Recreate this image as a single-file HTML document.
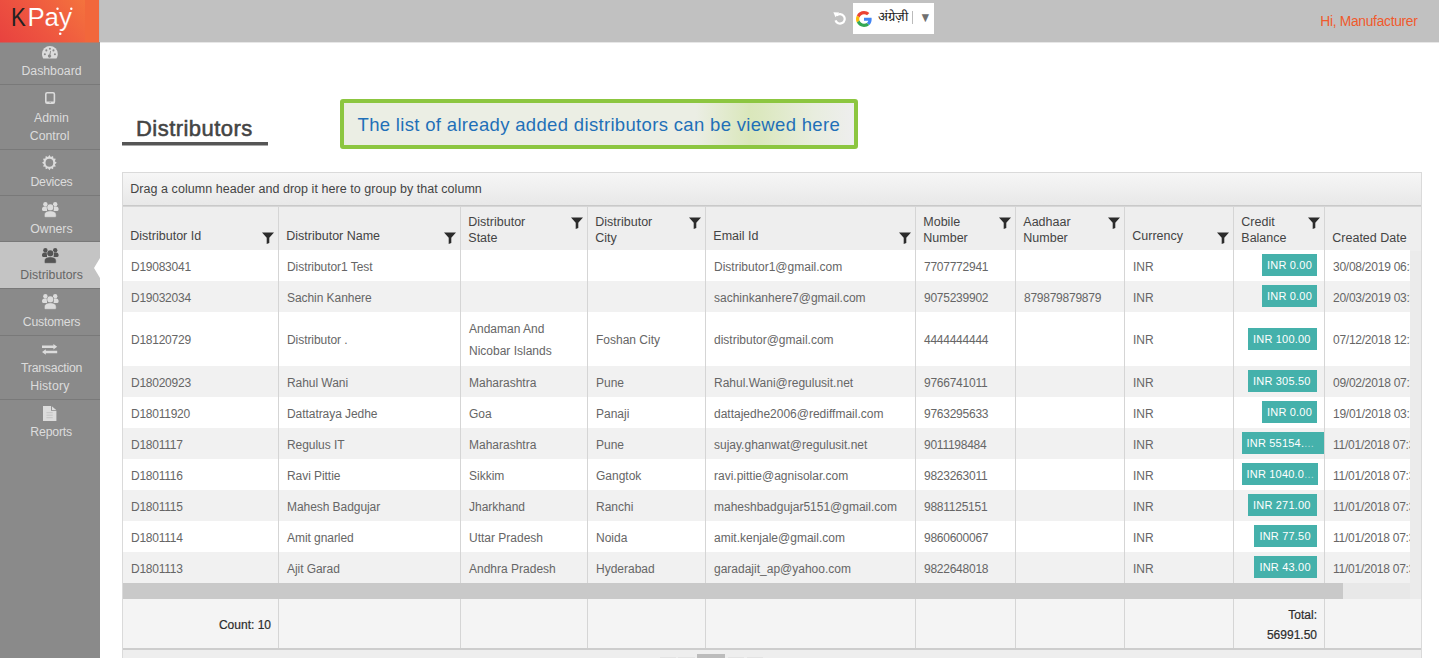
<!DOCTYPE html>
<html lang="en">
<head>
<meta charset="utf-8">
<title>Distributors</title>
<style>
*{box-sizing:border-box;margin:0;padding:0}
html,body{width:1439px;height:658px;overflow:hidden;background:#fff}
body{font-family:"Liberation Sans",sans-serif;font-size:12px;color:#666;position:relative}
i,u,b{font-style:normal;text-decoration:none;font-weight:normal}
#side{position:absolute;left:0;top:0;width:100px;height:658px;background:#8a8a8a}
#logo{position:absolute;left:0;top:0;width:99px;height:42px;background:#f2673b;overflow:hidden}
#logo .grad{position:absolute;left:0;top:0;width:85px;height:42px;background:linear-gradient(50deg,#e8423f 0%,#ee5540 45%,#f4733d 100%)}
#logo2{position:absolute;left:0;top:42px;width:99px;height:1px;opacity:.5;background:linear-gradient(90deg,#e8423f 0%,#f2673b 85%,#f2673b 100%)}
#logo svg{position:absolute;left:0;top:0}
#side .actbg{position:absolute;left:0;top:242px;width:100px;height:46px;background:#c4c4c4}
#side .arrow{position:absolute;left:94px;top:257.500px;width:0;height:0;border-top:10px solid transparent;border-bottom:10px solid transparent;border-right:6px solid #fff}
#side .sep{position:absolute;left:0;width:100px;height:1px;background:#797979}
#side .ic{position:absolute;display:block;overflow:visible}
#side .lb{position:absolute;left:0;width:100px;text-align:center;white-space:nowrap;font-size:12.300px;line-height:18px;color:#dcdcdc}
#side .lb.act{color:#666}
#top{position:absolute;left:100px;top:0;width:1339px;height:43px;background:#c1c1c1;border-bottom:1px solid #e7e7e7}
#tops{position:absolute;left:99px;top:0;width:1px;height:42px;background:#b7babd}
#hi{position:absolute;right:21.500px;top:13.500px;font-size:13.800px;letter-spacing:-.3px;color:#f05a2c;white-space:nowrap;line-height:16px}
#undo{position:absolute;left:733px;top:11px}
#gt{position:absolute;left:753px;top:3px;width:81px;height:31px;background:#fff}
#gg{position:absolute;left:3px;top:7.5px}
#hin{position:absolute;left:25px;top:5px;font-size:13px;line-height:18px;color:#222;font-family:"Liberation Sans","DejaVu Sans",sans-serif;white-space:nowrap}
#sep{position:absolute;left:59px;top:8px;width:1px;height:13px;background:#bbb}
#tri{position:absolute;left:66px;top:7px;font-size:13px;line-height:16px;color:#707070;transform:scale(.95,1.05)}
#title{position:absolute;left:136px;top:114.500px;font-size:22px;font-weight:normal;-webkit-text-stroke:.55px #444;color:#444;line-height:28px;white-space:nowrap;letter-spacing:.45px}
#tline{position:absolute;left:122px;top:142px;width:146px;height:4px;background:linear-gradient(#555 0,#555 76%,#aaa 76%,#aaa 100%)}
#tip{position:absolute;left:340px;top:99px;width:518px;height:50px;border:4px solid #8cc640;border-radius:3px;background:linear-gradient(90deg,#ebeee4 0%,#ebeee4 69%,#dae7bb 79.500%,#dce8c0 82%,#e8edde 92%,#eeeeee 100%);color:#1f70b8;font-size:18.500px;line-height:42px;white-space:nowrap;letter-spacing:.33px}
#tip span{position:absolute;left:13.500px;top:.5px}
#grid{position:absolute;left:122px;top:172px;width:1300px;height:486px;border:1px solid #dadada;border-bottom:none;background:#eee}
#grp{position:absolute;left:0;top:0;width:1298px;height:33px;background:linear-gradient(#f6f6f6,#e8e8e8);border-bottom:1px solid #c9c9c9;color:#444;font-size:12.500px;line-height:33px;padding-left:7.300px;letter-spacing:.045px;white-space:nowrap}
#hdr{position:absolute;left:0;top:33px;width:1298px;height:45px;background:#eeeeee;border-top:1px solid #d6d6d6}
.hc{position:absolute;top:34px;height:44px;color:#444;overflow:hidden;white-space:nowrap;font-size:12.500px}
.hc span{position:absolute;left:7.300px;line-height:16px}
.hc .h1{top:21px}
.hc .h2a{top:7px}
.hc .h2b{top:23px}
.hc .f{position:absolute;right:4px}
.hc .f1{top:25px}
.hc .f2{top:10px}
.row{position:absolute;left:0;width:1287px;background:#fff}
.row.alt{background:#f1f1f1}
.c{position:absolute;top:0;height:100%;white-space:nowrap;overflow:hidden;padding-left:8px}
.c.two{line-height:22px;padding-top:6px}
.bdg{position:absolute;height:22px;background:#45b1ab;color:#fff;font-size:11px;letter-spacing:.2px;line-height:23px;padding-left:5px;overflow:hidden;white-space:nowrap}
.bdg u{opacity:.55}
.vl{position:absolute;top:34px;width:1px;height:376px;background:#d5d5d5}
.vl2{position:absolute;top:426px;width:1px;height:49px;background:#d5d5d5}
#vs{position:absolute;left:1287px;top:78px;width:11px;height:348px;background:#ebebeb}
#hs{position:absolute;left:0;top:410px;width:1287px;height:16px;background:#e8e8e8}
#hst{position:absolute;left:0;top:0;width:1220px;height:16px;background:#c9c9c9}
#ftr{position:absolute;left:0;top:426px;width:1298px;height:51px;background:#f4f4f4;border-bottom:2px solid #cdcdcd;color:#2c2c2c;-webkit-text-stroke:.2px #2c2c2c}
#ftr .cnt{position:absolute;left:0;width:148px;text-align:right;top:17px;line-height:18px}
#ftr .tot{position:absolute;left:1000px;width:194px;text-align:right;top:5.500px;line-height:20.400px}
#pgr{position:absolute;left:0;top:477px;width:1298px;height:9px;background:#eee}
#pgr i{position:absolute;top:6.500px;height:5px;background:#e3e3e3}
#pgr i.sel{top:4px;background:#bcbcbc}
.c0,.c5,.c6,.c9{letter-spacing:-.25px}
.hc.last .h1{top:23px}
.c1{letter-spacing:-.06px}

</style>
</head>
<body>
<div id="side">
<div id="logo"><div class="grad"></div><svg width="100" height="43" viewBox="0 0 100 43"><text x="11" y="26" font-family="Liberation Sans, sans-serif" font-size="25.600" fill="#222" textLength="14.800" lengthAdjust="spacingAndGlyphs">K</text><text x="27.400" y="26" font-family="Liberation Sans, sans-serif" font-size="25" fill="#fff" stroke="#ef5d3e" stroke-width=".12" textLength="44.500" lengthAdjust="spacingAndGlyphs">Pay</text><g fill="#fff"><circle cx="57.500" cy="8.800" r="1.200"/><circle cx="71.300" cy="8.800" r="1.200"/><circle cx="60.200" cy="33.800" r="1.300"/></g></svg></div><div id="logo2"></div>
<div class="actbg"></div><b class="arrow"></b>
<i class="sep" style="top:84px"></i>
<i class="sep" style="top:149px"></i>
<i class="sep" style="top:195px"></i>
<i class="sep" style="top:241px"></i>
<i class="sep" style="top:288px"></i>
<i class="sep" style="top:335px"></i>
<i class="sep" style="top:399px"></i>
<svg class="ic" style="left:41.8px;top:46.1px;color:#dcdcdc" width="15.8" height="12.5" viewBox="0 0 16 12.500" preserveAspectRatio="none"><path d="M8 0a8 8 0 0 0-8 8c0 1.600.5 3.200 1.300 4.500h13.400c.8-1.300 1.300-2.900 1.300-4.500a8 8 0 0 0-8-8z" fill="currentColor"/><g fill="#8a8a8a"><circle cx="2.900" cy="8.200" r="1.050"/><circle cx="4.400" cy="4.400" r="1.050"/><circle cx="8" cy="2.800" r="1.050"/><circle cx="11.600" cy="4.400" r="1.050"/><circle cx="13.100" cy="8.200" r="1.050"/><path d="M9.100 5l-.55 3.700a1.600 1.600 0 1 1-1.100-.25l.9-3.600z"/></g></svg>
<svg class="ic" style="left:44.6px;top:91.8px;color:#dcdcdc" width="10.2" height="12.0" viewBox="0 0 10.200 12" preserveAspectRatio="none"><rect x=".8" y=".8" width="8.600" height="10.400" rx="1.400" fill="none" stroke="currentColor" stroke-width="1.600"/><rect x=".8" y="9.500" width="8.600" height="1.700" fill="currentColor"/><circle cx="5.100" cy="10.600" r=".5" fill="#8a8a8a"/></svg>
<svg class="ic" style="left:42.2px;top:155.3px;color:#dcdcdc" width="14.8" height="15.3" viewBox="0 0 15 15" preserveAspectRatio="none"><polygon points="7.50,0.05 8.98,1.99 11.22,1.05 11.53,3.47 13.95,3.77 13.01,6.02 14.95,7.50 13.01,8.98 13.95,11.22 11.53,11.53 11.22,13.95 8.98,13.01 7.50,14.95 6.02,13.01 3.78,13.95 3.47,11.53 1.05,11.23 1.99,8.98 0.05,7.50 1.99,6.02 1.05,3.77 3.47,3.47 3.77,1.05 6.02,1.99" fill="currentColor"/><circle cx="7.500" cy="7.500" r="3.900" fill="#8a8a8a"/></svg>
<svg class="ic" style="left:41.5px;top:201.8px;color:#dcdcdc" width="16.6" height="15.3" viewBox="0 0 16.600 15.300" preserveAspectRatio="none"><g fill="currentColor"><circle cx="3.400" cy="2.200" r="2.200"/><circle cx="13.200" cy="2.200" r="2.200"/><path d="M0 7.200C0 5.600 1 4.600 2.400 4.600h2.600v4.300H1.300C.5 8.900 0 8.300 0 7.200z"/><path d="M16.600 7.200c0-1.600-1-2.600-2.400-2.600h-2.600v4.300h3.700c.8 0 1.300-.6 1.300-1.700z"/><circle cx="8.300" cy="5.400" r="3.550" fill="#8a8a8a"/><circle cx="8.300" cy="5.400" r="3.050"/><path d="M2.400 14.300V13C2.400 10.200 4.600 8.900 8.300 8.900S14.200 10.200 14.200 13v1.300a1 1 0 0 1-1 1H3.400a1 1 0 0 1-1-1z" stroke="#8a8a8a" stroke-width=".5"/></g></svg>
<svg class="ic" style="left:41.5px;top:247.9px;color:#555" width="16.6" height="15.3" viewBox="0 0 16.600 15.300" preserveAspectRatio="none"><g fill="currentColor"><circle cx="3.400" cy="2.200" r="2.200"/><circle cx="13.200" cy="2.200" r="2.200"/><path d="M0 7.200C0 5.600 1 4.600 2.400 4.600h2.600v4.300H1.300C.5 8.900 0 8.300 0 7.200z"/><path d="M16.600 7.200c0-1.600-1-2.600-2.400-2.600h-2.600v4.300h3.700c.8 0 1.300-.6 1.300-1.700z"/><circle cx="8.300" cy="5.400" r="3.550" fill="#c4c4c4"/><circle cx="8.300" cy="5.400" r="3.050"/><path d="M2.400 14.300V13C2.400 10.200 4.600 8.900 8.300 8.900S14.200 10.200 14.200 13v1.300a1 1 0 0 1-1 1H3.400a1 1 0 0 1-1-1z" stroke="#c4c4c4" stroke-width=".5"/></g></svg>
<svg class="ic" style="left:41.5px;top:294.3px;color:#dcdcdc" width="16.6" height="15.3" viewBox="0 0 16.600 15.300" preserveAspectRatio="none"><g fill="currentColor"><circle cx="3.400" cy="2.200" r="2.200"/><circle cx="13.200" cy="2.200" r="2.200"/><path d="M0 7.200C0 5.600 1 4.600 2.400 4.600h2.600v4.300H1.300C.5 8.900 0 8.300 0 7.200z"/><path d="M16.600 7.200c0-1.600-1-2.600-2.400-2.600h-2.600v4.300h3.700c.8 0 1.300-.6 1.300-1.700z"/><circle cx="8.300" cy="5.400" r="3.550" fill="#8a8a8a"/><circle cx="8.300" cy="5.400" r="3.050"/><path d="M2.400 14.300V13C2.400 10.200 4.600 8.900 8.300 8.900S14.200 10.200 14.200 13v1.300a1 1 0 0 1-1 1H3.400a1 1 0 0 1-1-1z" stroke="#8a8a8a" stroke-width=".5"/></g></svg>
<svg class="ic" style="left:42px;top:344px;color:#dcdcdc" width="15.2" height="11.0" viewBox="0 0 15.200 11" preserveAspectRatio="none"><g fill="currentColor"><path d="M0 1.500h11.400V0l3.800 2.700-3.800 2.700V3.900H0z"/><path d="M15.200 6.800H3.800V5.300L0 8l3.800 2.700V9.200h11.400z"/></g></svg>
<svg class="ic" style="left:43px;top:405.8px;color:#dcdcdc" width="13.4" height="14.9" viewBox="0 0 13.400 14.900" preserveAspectRatio="none"><g fill="currentColor"><path d="M0 0h8v4.700h5.400v10.200H0z"/><path d="M8.900.2l4.300 3.700H8.900z"/></g><g stroke="#8a8a8a" stroke-width=".9" opacity=".33"><path d="M3.500 6.700h6.200M3.500 9.200h6.200M3.500 11.700h6.200"/></g></svg>
<span class="lb" style="top:61.9px;left:1.50px;letter-spacing:0px">Dashboard</span>
<span class="lb" style="top:108.7px;left:1.50px;letter-spacing:0px">Admin</span>
<span class="lb" style="top:126.5px;left:-0.40px;letter-spacing:0px">Control</span>
<span class="lb" style="top:173.2px;left:1.48px;letter-spacing:-0.25px">Devices</span>
<span class="lb" style="top:219.5px;left:1.40px;letter-spacing:0px">Owners</span>
<span class="lb act" style="top:266.0px;left:1.62px;letter-spacing:0.03px">Distributors</span>
<span class="lb" style="top:312.5px;left:1.49px;letter-spacing:-0.22px">Customers</span>
<span class="lb" style="top:358.5px;left:1.58px;letter-spacing:-0.24px">Transaction</span>
<span class="lb" style="top:376.9px;left:-0.22px;letter-spacing:0.15px">History</span>
<span class="lb" style="top:423.4px;left:1.20px;letter-spacing:-0.2px">Reports</span>
</div>
<div id="tops"></div>
<div id="top">
<svg id="undo" width="14" height="14" viewBox="0 0 14 14"><path d="M3.600 4.600A4.700 4.700 0 1 1 2.500 9.300" fill="none" stroke="#fff" stroke-width="2.200"/><path d="M.4 1.200l5.800.3-3.700 4.800z" fill="#fff"/></svg>
<div id="gt"><svg id="gg" width="16" height="16" viewBox="0 0 48 48"><path fill="#EA4335" d="M24 9.500c3.540 0 6.710 1.220 9.210 3.600l6.850-6.850C35.900 2.380 30.470 0 24 0 14.620 0 6.510 5.380 2.560 13.220l7.980 6.190C12.430 13.720 17.740 9.500 24 9.500z"/><path fill="#4285F4" d="M46.980 24.550c0-1.570-.15-3.090-.38-4.550H24v9.020h12.940c-.58 2.960-2.260 5.480-4.780 7.180l7.730 6c4.510-4.180 7.090-10.360 7.090-17.650z"/><path fill="#FBBC05" d="M10.530 28.590c-.48-1.450-.76-2.990-.76-4.590s.27-3.140.76-4.590l-7.980-6.190C.92 16.460 0 20.120 0 24c0 3.880.92 7.540 2.560 10.780l7.970-6.190z"/><path fill="#34A853" d="M24 48c6.480 0 11.930-2.130 15.890-5.810l-7.730-6c-2.150 1.450-4.920 2.300-8.160 2.300-6.260 0-11.570-4.220-13.470-9.910l-7.980 6.190C6.510 42.620 14.620 48 24 48z"/></svg><span id="hin">अंग्रेज़ी</span><i id="sep"></i><span id="tri">▼</span></div>
<div id="hi">Hi, Manufacturer</div>
</div>
<div id="title">Distributors</div>
<div id="tline"></div>
<div id="tip"><span>The list of already added distributors can be viewed here</span></div>
<div id="grid">
<div id="grp">Drag a column header and drop it here to group by that column</div>
<div id="hdr"></div>
<div class="hc" style="left:0px;width:155px"><span class="h1">Distributor Id</span><svg class="f f1" width="12" height="12" viewBox="0 0 12 12"><path d="M0 .5h12L7.300 5.800V11L4.700 12V5.800z" fill="#2b2b2b"/></svg></div>
<div class="hc" style="left:156px;width:181px"><span class="h1">Distributor Name</span><svg class="f f1" width="12" height="12" viewBox="0 0 12 12"><path d="M0 .5h12L7.300 5.800V11L4.700 12V5.800z" fill="#2b2b2b"/></svg></div>
<div class="hc" style="left:338px;width:126px"><span class="h2a">Distributor</span><span class="h2b">State</span><svg class="f f2" width="12" height="12" viewBox="0 0 12 12"><path d="M0 .5h12L7.300 5.800V11L4.700 12V5.800z" fill="#2b2b2b"/></svg></div>
<div class="hc" style="left:465px;width:117px"><span class="h2a">Distributor</span><span class="h2b">City</span><svg class="f f2" width="12" height="12" viewBox="0 0 12 12"><path d="M0 .5h12L7.300 5.800V11L4.700 12V5.800z" fill="#2b2b2b"/></svg></div>
<div class="hc" style="left:583px;width:209px"><span class="h1">Email Id</span><svg class="f f1" width="12" height="12" viewBox="0 0 12 12"><path d="M0 .5h12L7.300 5.800V11L4.700 12V5.800z" fill="#2b2b2b"/></svg></div>
<div class="hc" style="left:793px;width:99px"><span class="h2a">Mobile</span><span class="h2b">Number</span><svg class="f f2" width="12" height="12" viewBox="0 0 12 12"><path d="M0 .5h12L7.300 5.800V11L4.700 12V5.800z" fill="#2b2b2b"/></svg></div>
<div class="hc" style="left:893px;width:108px"><span class="h2a">Aadhaar</span><span class="h2b">Number</span><svg class="f f2" width="12" height="12" viewBox="0 0 12 12"><path d="M0 .5h12L7.300 5.800V11L4.700 12V5.800z" fill="#2b2b2b"/></svg></div>
<div class="hc" style="left:1002px;width:108px"><span class="h1">Currency</span><svg class="f f1" width="12" height="12" viewBox="0 0 12 12"><path d="M0 .5h12L7.300 5.800V11L4.700 12V5.800z" fill="#2b2b2b"/></svg></div>
<div class="hc" style="left:1111px;width:90px"><span class="h2a">Credit</span><span class="h2b">Balance</span><svg class="f f2" width="12" height="12" viewBox="0 0 12 12"><path d="M0 .5h12L7.300 5.800V11L4.700 12V5.800z" fill="#2b2b2b"/></svg></div>
<div class="hc last" style="left:1202px;width:85px"><span class="h1">Created Date Time</span></div>
<div class="row" style="top:77px;height:31px"><div class="c c0" style="left:0px;width:155px;line-height:35px">D19083041</div><div class="c c1" style="left:156px;width:181px;line-height:35px">Distributor1 Test</div><div class="c c2" style="left:338px;width:126px;line-height:35px"></div><div class="c c3" style="left:465px;width:117px;line-height:35px"></div><div class="c c4" style="left:583px;width:209px;line-height:35px">Distributor1@gmail.com</div><div class="c c5" style="left:793px;width:99px;line-height:35px">7707772941</div><div class="c c6" style="left:893px;width:108px;line-height:35px"></div><div class="c c7" style="left:1002px;width:108px;line-height:35px">INR</div><div class="c" style="left:1111px;width:90px;padding:0"><span class="bdg" style="left:28px;width:55px;top:4px">INR 0.00</span></div><div class="c c9" style="left:1202px;width:85px;line-height:35px">30/08/2019 06:31:14</div></div>
<div class="row alt" style="top:108px;height:31px"><div class="c c0" style="left:0px;width:155px;line-height:35px">D19032034</div><div class="c c1" style="left:156px;width:181px;line-height:35px">Sachin Kanhere</div><div class="c c2" style="left:338px;width:126px;line-height:35px"></div><div class="c c3" style="left:465px;width:117px;line-height:35px"></div><div class="c c4" style="left:583px;width:209px;line-height:35px">sachinkanhere7@gmail.com</div><div class="c c5" style="left:793px;width:99px;line-height:35px">9075239902</div><div class="c c6" style="left:893px;width:108px;line-height:35px">879879879879</div><div class="c c7" style="left:1002px;width:108px;line-height:35px">INR</div><div class="c" style="left:1111px;width:90px;padding:0"><span class="bdg" style="left:28px;width:55px;top:4px">INR 0.00</span></div><div class="c c9" style="left:1202px;width:85px;line-height:35px">20/03/2019 03:31:14</div></div>
<div class="row" style="top:139px;height:54px"><div class="c c0" style="left:0px;width:155px;line-height:56px">D18120729</div><div class="c c1" style="left:156px;width:181px;line-height:56px">Distributor .</div><div class="c c2 two" style="left:338px;width:126px"><span>Andaman And</span><br><span>Nicobar Islands</span></div><div class="c c3" style="left:465px;width:117px;line-height:56px">Foshan City</div><div class="c c4" style="left:583px;width:209px;line-height:56px">distributor@gmail.com</div><div class="c c5" style="left:793px;width:99px;line-height:56px">4444444444</div><div class="c c6" style="left:893px;width:108px;line-height:56px"></div><div class="c c7" style="left:1002px;width:108px;line-height:56px">INR</div><div class="c" style="left:1111px;width:90px;padding:0"><span class="bdg" style="left:14px;width:69px;top:16px">INR 100.00</span></div><div class="c c9" style="left:1202px;width:85px;line-height:56px">07/12/2018 12:31:14</div></div>
<div class="row alt" style="top:193px;height:31px"><div class="c c0" style="left:0px;width:155px;line-height:35px">D18020923</div><div class="c c1" style="left:156px;width:181px;line-height:35px">Rahul Wani</div><div class="c c2" style="left:338px;width:126px;line-height:35px">Maharashtra</div><div class="c c3" style="left:465px;width:117px;line-height:35px">Pune</div><div class="c c4" style="left:583px;width:209px;line-height:35px">Rahul.Wani@regulusit.net</div><div class="c c5" style="left:793px;width:99px;line-height:35px">9766741011</div><div class="c c6" style="left:893px;width:108px;line-height:35px"></div><div class="c c7" style="left:1002px;width:108px;line-height:35px">INR</div><div class="c" style="left:1111px;width:90px;padding:0"><span class="bdg" style="left:14px;width:69px;top:4px">INR 305.50</span></div><div class="c c9" style="left:1202px;width:85px;line-height:35px">09/02/2018 07:31:14</div></div>
<div class="row" style="top:224px;height:31px"><div class="c c0" style="left:0px;width:155px;line-height:35px">D18011920</div><div class="c c1" style="left:156px;width:181px;line-height:35px">Dattatraya Jedhe</div><div class="c c2" style="left:338px;width:126px;line-height:35px">Goa</div><div class="c c3" style="left:465px;width:117px;line-height:35px">Panaji</div><div class="c c4" style="left:583px;width:209px;line-height:35px">dattajedhe2006@rediffmail.com</div><div class="c c5" style="left:793px;width:99px;line-height:35px">9763295633</div><div class="c c6" style="left:893px;width:108px;line-height:35px"></div><div class="c c7" style="left:1002px;width:108px;line-height:35px">INR</div><div class="c" style="left:1111px;width:90px;padding:0"><span class="bdg" style="left:28px;width:55px;top:4px">INR 0.00</span></div><div class="c c9" style="left:1202px;width:85px;line-height:35px">19/01/2018 03:31:14</div></div>
<div class="row alt" style="top:255px;height:31px"><div class="c c0" style="left:0px;width:155px;line-height:35px">D1801117</div><div class="c c1" style="left:156px;width:181px;line-height:35px">Regulus IT</div><div class="c c2" style="left:338px;width:126px;line-height:35px">Maharashtra</div><div class="c c3" style="left:465px;width:117px;line-height:35px">Pune</div><div class="c c4" style="left:583px;width:209px;line-height:35px">sujay.ghanwat@regulusit.net</div><div class="c c5" style="left:793px;width:99px;line-height:35px">9011198484</div><div class="c c6" style="left:893px;width:108px;line-height:35px"></div><div class="c c7" style="left:1002px;width:108px;line-height:35px">INR</div><div class="c" style="left:1111px;width:90px;padding:0"><span class="bdg" style="left:7.5px;width:83.5px;top:4px">INR 55154.<u>...</u></span></div><div class="c c9" style="left:1202px;width:85px;line-height:35px">11/01/2018 07:31:14</div></div>
<div class="row" style="top:286px;height:31px"><div class="c c0" style="left:0px;width:155px;line-height:35px">D1801116</div><div class="c c1" style="left:156px;width:181px;line-height:35px">Ravi Pittie</div><div class="c c2" style="left:338px;width:126px;line-height:35px">Sikkim</div><div class="c c3" style="left:465px;width:117px;line-height:35px">Gangtok</div><div class="c c4" style="left:583px;width:209px;line-height:35px">ravi.pittie@agnisolar.com</div><div class="c c5" style="left:793px;width:99px;line-height:35px">9823263011</div><div class="c c6" style="left:893px;width:108px;line-height:35px"></div><div class="c c7" style="left:1002px;width:108px;line-height:35px">INR</div><div class="c" style="left:1111px;width:90px;padding:0"><span class="bdg" style="left:7.5px;width:76.0px;top:4px">INR 1040.0<u>...</u></span></div><div class="c c9" style="left:1202px;width:85px;line-height:35px">11/01/2018 07:31:14</div></div>
<div class="row alt" style="top:317px;height:31px"><div class="c c0" style="left:0px;width:155px;line-height:35px">D1801115</div><div class="c c1" style="left:156px;width:181px;line-height:35px">Mahesh Badgujar</div><div class="c c2" style="left:338px;width:126px;line-height:35px">Jharkhand</div><div class="c c3" style="left:465px;width:117px;line-height:35px">Ranchi</div><div class="c c4" style="left:583px;width:209px;line-height:35px">maheshbadgujar5151@gmail.com</div><div class="c c5" style="left:793px;width:99px;line-height:35px">9881125151</div><div class="c c6" style="left:893px;width:108px;line-height:35px"></div><div class="c c7" style="left:1002px;width:108px;line-height:35px">INR</div><div class="c" style="left:1111px;width:90px;padding:0"><span class="bdg" style="left:14px;width:69px;top:4px">INR 271.00</span></div><div class="c c9" style="left:1202px;width:85px;line-height:35px">11/01/2018 07:31:14</div></div>
<div class="row" style="top:348px;height:31px"><div class="c c0" style="left:0px;width:155px;line-height:35px">D1801114</div><div class="c c1" style="left:156px;width:181px;line-height:35px">Amit gnarled</div><div class="c c2" style="left:338px;width:126px;line-height:35px">Uttar Pradesh</div><div class="c c3" style="left:465px;width:117px;line-height:35px">Noida</div><div class="c c4" style="left:583px;width:209px;line-height:35px">amit.kenjale@gmail.com</div><div class="c c5" style="left:793px;width:99px;line-height:35px">9860600067</div><div class="c c6" style="left:893px;width:108px;line-height:35px"></div><div class="c c7" style="left:1002px;width:108px;line-height:35px">INR</div><div class="c" style="left:1111px;width:90px;padding:0"><span class="bdg" style="left:20.40000000000009px;width:62.59999999999991px;top:4px">INR 77.50</span></div><div class="c c9" style="left:1202px;width:85px;line-height:35px">11/01/2018 07:31:14</div></div>
<div class="row alt" style="top:379px;height:31px"><div class="c c0" style="left:0px;width:155px;line-height:35px">D1801113</div><div class="c c1" style="left:156px;width:181px;line-height:35px">Ajit Garad</div><div class="c c2" style="left:338px;width:126px;line-height:35px">Andhra Pradesh</div><div class="c c3" style="left:465px;width:117px;line-height:35px">Hyderabad</div><div class="c c4" style="left:583px;width:209px;line-height:35px">garadajit_ap@yahoo.com</div><div class="c c5" style="left:793px;width:99px;line-height:35px">9822648018</div><div class="c c6" style="left:893px;width:108px;line-height:35px"></div><div class="c c7" style="left:1002px;width:108px;line-height:35px">INR</div><div class="c" style="left:1111px;width:90px;padding:0"><span class="bdg" style="left:20.40000000000009px;width:62.59999999999991px;top:4px">INR 43.00</span></div><div class="c c9" style="left:1202px;width:85px;line-height:35px">11/01/2018 07:31:14</div></div>
<div id="vs"></div><div id="hs"><div id="hst"></div></div>
<div id="ftr"><span class="cnt">Count: 10</span><span class="tot">Total:<br>56991.50</span></div>
<div class="vl" style="left:155px"></div>
<div class="vl2" style="left:155px"></div>
<div class="vl" style="left:337px"></div>
<div class="vl2" style="left:337px"></div>
<div class="vl" style="left:464px"></div>
<div class="vl2" style="left:464px"></div>
<div class="vl" style="left:582px"></div>
<div class="vl2" style="left:582px"></div>
<div class="vl" style="left:792px"></div>
<div class="vl2" style="left:792px"></div>
<div class="vl" style="left:892px"></div>
<div class="vl2" style="left:892px"></div>
<div class="vl" style="left:1001px"></div>
<div class="vl2" style="left:1001px"></div>
<div class="vl" style="left:1110px"></div>
<div class="vl2" style="left:1110px"></div>
<div class="vl" style="left:1201px"></div>
<div class="vl2" style="left:1201px"></div>
<div id="pgr"><i style="left:537px;width:16px"></i><i style="left:555px;width:17px"></i><i class="sel" style="left:574px;width:28px"></i><i style="left:605px;width:16px"></i><i style="left:624px;width:16px"></i></div>
</div>
</body>
</html>
